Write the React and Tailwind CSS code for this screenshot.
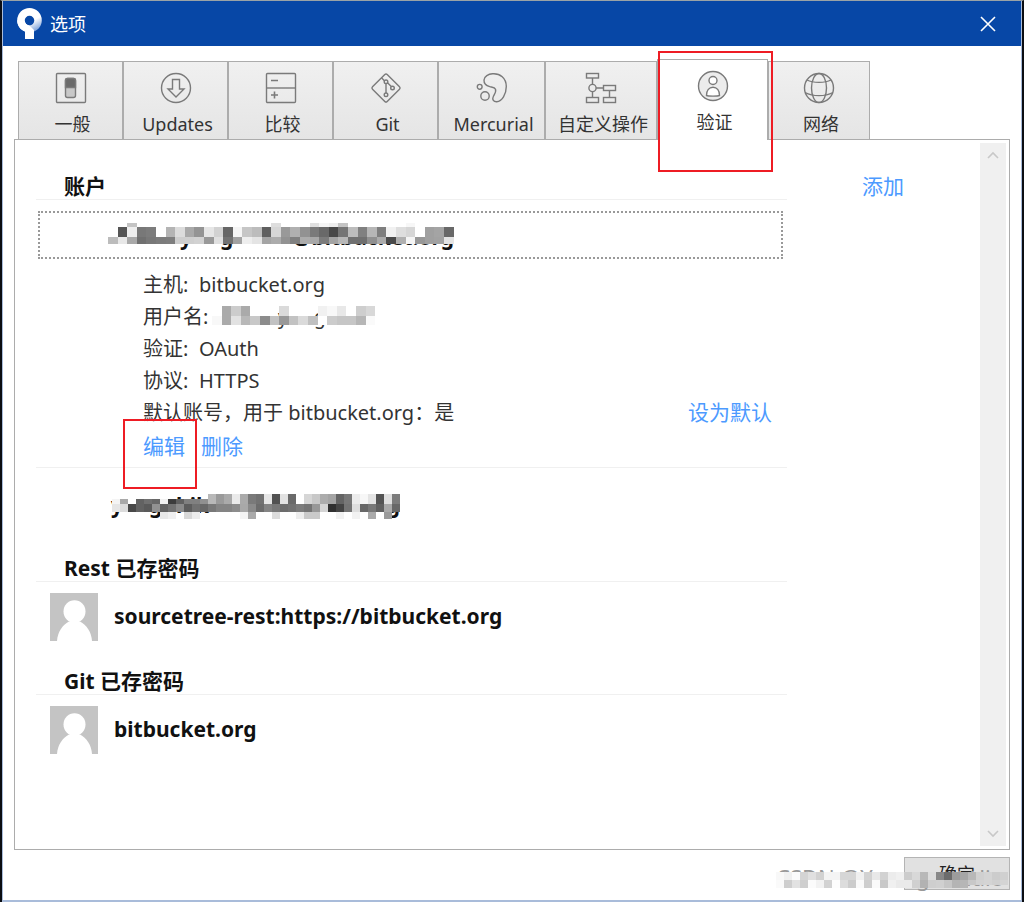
import { useState } from 'react';
import clsx from 'clsx';

const stroke = {
  fill: 'none',
  stroke: '#7a7a7a',
  strokeWidth: 1.4,
};

const GeneralIcon = () => (
  <svg width="32" height="32" viewBox="0 0 32 32" {...stroke}>
    <rect x="1.5" y="1.5" width="29" height="29" rx="1" />
    <rect x="10.5" y="6.5" width="10" height="19" rx="2" fill="#c8c8c8" />
    <path d="M10.500 15.500V8.500a2 2 0 0 1 2-2h6a2 2 0 0 1 2 2v7z" fill="#6a6a6a" />
  </svg>
);

const UpdatesIcon = () => (
  <svg width="32" height="32" viewBox="0 0 32 32" {...stroke}>
    <circle cx="16" cy="16" r="14.5" />
    <path d="M12.500 7.500h7v9.500h4.500l-8 8-8-8h4.500z" />
  </svg>
);

const DiffIcon = () => (
  <svg width="32" height="32" viewBox="0 0 32 32" {...stroke}>
    <rect x="1.5" y="1.5" width="29" height="29" rx="1" />
    <path d="M1.500 16h29" />
    <path d="M6 8.500h7M6 23h7M9.500 19.500v7" strokeWidth="1.6" />
  </svg>
);

const GitIcon = () => (
  <svg width="32" height="32" viewBox="0 0 32 32" {...stroke}>
    <path d="M14.800 2.500a1.700 1.700 0 0 1 2.400 0l12.300 12.300a1.700 1.700 0 0 1 0 2.400L17.200 29.500a1.700 1.700 0 0 1-2.400 0L2.500 17.200a1.700 1.700 0 0 1 0-2.400z" />
    <path d="M11.500 5.800l3.400 3.400M16 11.500v9.500M17.500 10.800l4 4" />
    <circle cx="16" cy="9.800" r="1.800" />
    <circle cx="22.500" cy="16" r="1.800" />
    <circle cx="16" cy="22.800" r="1.800" />
  </svg>
);

const MercurialIcon = () => (
  <svg width="32" height="32" viewBox="0 0 32 32" {...stroke}>
    <path d="M16.500 1.800C24 1.200 30.300 6 30.300 14.500c0 7.500-4.300 15-9.500 15.300-3.300.2-4.800-2.300-3.600-5 1-2.400 3.300-5 2.300-7.600-.8-2-3.500-2-5.700-2.600-3.600-1-6-3.200-5.800-6.600.2-3.700 4.500-5.900 8.500-6.200z" />
    <circle cx="3.700" cy="14.800" r="2.400" />
    <circle cx="9" cy="24" r="4.200" />
  </svg>
);

const ActionsIcon = () => (
  <svg width="32" height="32" viewBox="0 0 32 32" {...stroke}>
    <rect x="1.500" y="1.500" width="12" height="4.500" />
    <rect x="1.500" y="25.500" width="12" height="5" />
    <rect x="18.500" y="13.500" width="12" height="5" />
    <rect x="18.500" y="25.500" width="12" height="5" />
    <circle cx="7.500" cy="16" r="3.600" />
    <path d="M7.500 6v6.400M7.500 19.600v5.900M11.100 16h7.400M24.500 18.500v7" />
  </svg>
);

const AuthIcon = () => (
  <svg width="32" height="32" viewBox="0 0 32 32" {...stroke}>
    <circle cx="16" cy="16" r="14.500" fill="#ececec" />
    <circle cx="16" cy="10.500" r="4" fill="#fff" />
    <path d="M9.500 25.500c0-5 2.600-8.300 6.500-8.300s6.500 3.300 6.500 8.300c-2 .8-11 .8-13 0z" fill="#fff" />
  </svg>
);

const NetworkIcon = () => (
  <svg width="32" height="32" viewBox="0 0 32 32" {...stroke}>
    <circle cx="16" cy="16" r="14.500" />
    <ellipse cx="16" cy="16" rx="7.500" ry="14.500" />
    <path d="M4 8c6 3.200 18 3.200 24 0M2 20.500c8 4.200 20 4.200 28 0" />
  </svg>
);

const tabs = [
  { id: 'general', label: '一般', icon: GeneralIcon, width: 'w-[105px]' },
  { id: 'updates', label: 'Updates', icon: UpdatesIcon, width: 'w-[105px]' },
  { id: 'diff', label: '比较', icon: DiffIcon, width: 'w-[105px]' },
  { id: 'git', label: 'Git', icon: GitIcon, width: 'w-[105px]' },
  { id: 'mercurial', label: 'Mercurial', icon: MercurialIcon, width: 'w-[107px]' },
  { id: 'actions', label: '自定义操作', icon: ActionsIcon, width: 'w-[112px]' },
  { id: 'auth', label: '验证', icon: AuthIcon, width: 'w-[111px]' },
  { id: 'network', label: '网络', icon: NetworkIcon, width: 'w-[102px]' },
];

// Each row is a list of grey levels in hex, "--" leaves the cell empty
const accountRows = [
  { y: 0, h: 4, cells: '-- -- c4 -- -- -- -- -- -- -- -- -- -- -- -- -- -- de -- -- -- e0 f5 ee c4 -- -- -- -- -- -- f7' },
  { y: 4, h: 10, cells: '-- 55 ee 78 7c ff b4 dc a9 94 e6 d2 66 f5 c6 bc 5f d6 99 b0 92 7a 69 48 75 bc 80 b6 7e f1 de d6 ff a0 a4 68' },
  { y: 14, h: 7, cells: 'bc e8 a9 70 78 7c 7e ce cf d2 99 e0 72 a2 ee e4 a4 ac 92 80 ac a8 7c a4 b8 70 70 90 ab 4a b0 f5 98 a0 a2 e4' },
];

const userRows = [
  { y: 0, h: 10, cells: '-- aa cc aa -- -- -- da -- -- -- f1 f8 e8 -- ce d8' },
  { y: 10, h: 9, cells: 'f8 aa e2 b8 c8 8c c2 98 c2 da c0 ff cc c6 c6 b6 fa' },
];

const secondRows = [
  { y: 0, h: 2, cells: '-- -- -- -- -- -- -- -- -- -- -- -- b8 9a aa ea aa 7a 72 e6 52 e2 6a ff d6 c8 ac a4 64 78 ec f7 e4 54 e0 7c' },
  { y: 2, h: 3, cells: '-- -- -- -- -- -- -- -- -- -- -- -- b8 9a aa ea aa 7a 72 e6 52 e2 6a ff d6 c8 ac a4 64 78 ec f7 e4 54 e0 7c' },
  { y: 5, h: 5, cells: 'f4 a9 ff 62 70 68 f1 3c 60 80 80 90 b8 9a aa ea aa 7a 72 e6 52 e2 6a ff d6 c8 ac a4 64 78 ec f7 e4 54 e0 7c' },
  { y: 10, h: 8, cells: 'e6 dc 48 62 5a 92 62 72 8a 5c 70 68 78 84 84 8c a8 8a 6c 84 78 6c 72 7c 74 98 d4 30 44 74 de 68 78 60 aa 68' },
  { y: 18, h: 7, cells: '-- -- -- -- -- -- e8 f0 -- d8 ec -- -- -- -- -- f4 aa -- -- dc -- -- ee ca ca -- -- f2 -- f2 -- aa -- 9a' },
];

const watermarkRows = [
  { y: 6, h: 8, cells: 'f8 f0 fb d4 e0 d2 f4 f4 d6 d6 f0 d2 e8 d2 ec f0 cc d8 b8 dc 88 6c 9c a6 b8 d0 d4 cc d0' },
  { y: 14, h: 8, cells: 'fa ce e2 ce fb f2 d2 fd dc cc fa ce fa c8 f0 ea ea d0 b2 ce d0 c6 b4 b6' },
  { y: 14, h: 5, cells: '-- -- -- -- -- -- -- -- -- -- -- -- -- -- -- -- -- -- -- -- -- -- -- -- c8 d2 d4 d0 d4' },
];

function Mosaic({ rows, cell, width, height, className, children }) {
  return (
    <svg
      width={width}
      height={height}
      viewBox={`0 0 ${width} ${height}`}
      className={clsx('block overflow-visible', className)}
      shapeRendering="crispEdges"
    >
      {children}
      {rows.map((row, r) =>
        row.cells.split(' ').map((level, i) =>
          level === '--' ? null : (
            <rect
              key={`${r}-${i}`}
              x={i * cell}
              y={row.y}
              width={cell}
              height={row.h}
              fill={`#${level}${level}${level}`}
            />
          )
        )
      )}
    </svg>
  );
}

const Logo = () => (
  <svg width="25" height="32" viewBox="0 0 25 32">
    <defs>
      <linearGradient id="logo-shade" x1="0.400" y1="0.300" x2="0.800" y2="1">
        <stop offset="0.400" stopColor="#fff" />
        <stop offset="1" stopColor="#6f98d6" />
      </linearGradient>
    </defs>
    <path
      fillRule="evenodd"
      fill="url(#logo-shade)"
      d="M12.500 0a12.300 12.300 0 0 1 12.300 12.300c0 5.500-3.300 9.500-7.800 11.300H8C3.500 21.800.2 17.800.2 12.300A12.300 12.300 0 0 1 12.500 0zm0 7.800a4.800 4.800 0 1 0 0 9.600 4.800 4.800 0 0 0 0-9.600z"
    />
    <path fill="#fff" d="M.2 12.300c0 5.500 3.300 9.500 7.800 11.300V31h9v-9l-4.500-4.600a4.800 4.800 0 0 1-4.800-4.800z" />
  </svg>
);

const Avatar = () => (
  <svg width="48" height="48" viewBox="0 0 48 48" className="shrink-0">
    <path fill="#c4c4c4" d="M0 0h48v48H0z" />
    <ellipse cx="24.500" cy="18.500" rx="11" ry="11.200" fill="#fff" />
    <path fill="#fff" d="M7 48c.5-9 5.500-16 12-19.500h11C36.500 32 41.500 39 42 48z" />
  </svg>
);

const Chevron = ({ d }) => (
  <svg width="12" height="8" viewBox="0 0 12 8" fill="none" stroke="#c8c8c8" strokeWidth="1.600">
    <path d={d} />
  </svg>
);

function SectionTitle({ children, className }) {
  return (
    <h2
      className={clsx(
        'border-b border-[#f0f0f0] pl-7 text-[21px] leading-[26px] font-bold text-[#111]',
        className
      )}
    >
      {children}
    </h2>
  );
}

function SavedPassword({ name }) {
  return (
    <div className="mt-[11px] flex items-center gap-4 pl-[14px] text-[21px] font-bold text-[#111]">
      <Avatar />
      {name}
    </div>
  );
}

function Detail({ label, children }) {
  return (
    <div className="flex h-8 items-center">
      <dt className="min-w-14">{label}:</dt>
      <dd>{children}</dd>
    </div>
  );
}

export default function App() {
  const [active, setActive] = useState('auth');

  return (
    <div className="flex min-h-screen flex-col border-x-2 border-t border-x-[#0b0d12] border-t-[#9aa3a6] bg-white font-['Noto_Sans','Noto_Sans_CJK_SC',sans-serif] text-[#333]">
      <div className="flex flex-1 flex-col border-x border-b-2 border-[#a9bcda]">
        {/* Title bar */}
        <header className="flex h-[45px] items-center gap-2 bg-[#0747a6] pr-[25px] pl-[14px] text-white">
          <Logo />
          <h1 className="flex-1 text-lg">选项</h1>
          <button type="button" aria-label="关闭">
            <svg width="16" height="16" viewBox="0 0 16 16" fill="none" stroke="#fff" strokeWidth="1.600">
              <path d="M1 1l14 14M15 1L1 15" />
            </svg>
          </button>
        </header>

        <main className="flex flex-1 flex-col pt-[13px] pr-[11px] pb-[10px] pl-[11px]">
          {/* Tabs */}
          <nav className="flex items-end pl-1">
            {tabs.map(({ id, label, icon: Icon, width }) => (
              <button
                key={id}
                type="button"
                onClick={() => setActive(id)}
                className={clsx(
                  'relative flex shrink-0 flex-col items-center border border-b-0 border-[#acacac] pt-[10px] text-lg leading-[26px] whitespace-nowrap',
                  width,
                  active === id
                    ? 'z-10 -mb-px h-[81px] bg-white'
                    : 'h-[78px] bg-linear-to-b from-[#f0f0f0] to-[#e5e5e5]'
                )}
              >
                <Icon />
                <span className="mt-[7px] pl-1">{label}</span>
                {id === 'auth' && (
                  <span className="pointer-events-none absolute -top-[9px] -right-[6px] left-0 h-[121px] border-2 border-[#ee1c24]" />
                )}
              </button>
            ))}
          </nav>

          {/* Authentication panel */}
          <section className="flex flex-1 border border-[#acacac] py-[3px] pr-[3px] pl-[21px]">
            <div className="flex-1 pt-[30px]">
              <SectionTitle>账户</SectionTitle>
              <div className="mt-[11px] mr-1 ml-[2px] h-12 border-2 border-dotted border-[#999] pt-[10px] pl-[68px]">
                <Mosaic rows={accountRows} cell={9.6} width={346} height={21}>
                  <g className="text-[21px] font-bold" fill="#111">
                    <text x="72" y="22">y</text>
                    <text x="112" y="22">g</text>
                    <text x="346" y="22" textAnchor="end">@bitbucket.org</text>
                  </g>
                </Mosaic>
              </div>

              <div className="mt-[10px] border-b border-[#f0f0f0] pr-[15px] pb-[2px] pl-[107px] text-[20px]">
                <dl>
                  <Detail label="主机">bitbucket.org</Detail>
                  <Detail label="用户名">
                    <Mosaic rows={userRows} cell={9.6} width={164} height={22} className="ml-1">
                      <g className="text-[19px]" fill="#333">
                        <text x="66" y="18">y</text>
                        <text x="102" y="18">g</text>
                      </g>
                    </Mosaic>
                  </Detail>
                  <Detail label="验证">OAuth</Detail>
                  <Detail label="协议">HTTPS</Detail>
                </dl>
                <div className="flex h-8 items-center justify-between">
                  <p>默认账号，用于 bitbucket.org：是</p>
                  <a href="#default" className="text-[21px] text-[#4c9aff]">设为默认</a>
                </div>
                <div className="flex h-9 items-center gap-4 text-[21px] text-[#4c9aff]">
                  <span className="relative">
                    <a href="#edit">编辑</a>
                    <span className="pointer-events-none absolute -top-3 -right-3 -left-5 h-[70px] border-2 border-[#ee1c24]" />
                  </span>
                  <a href="#delete">删除</a>
                </div>
              </div>

              <Mosaic rows={secondRows} cell={8} width={288} height={26} className="mt-[26px] ml-[76px]">
                <g className="text-[21px] font-bold" fill="#111">
                  <text x="-1" y="19">y</text>
                  <text x="37" y="19">g</text>
                  <text x="64" y="19">hik</text>
                  <text x="288" y="19" textAnchor="end">g</text>
                </g>
              </Mosaic>

              <SectionTitle className="mt-[35px]">Rest 已存密码</SectionTitle>
              <SavedPassword name="sourcetree-rest:https://bitbucket.org" />
              <SectionTitle className="mt-[27px]">Git 已存密码</SectionTitle>
              <SavedPassword name="bitbucket.org" />
            </div>

            <div className="w-[193px] pt-[30px] pl-[75px] text-[21px] leading-[26px]">
              <a href="#add" className="text-[#4c9aff]">添加</a>
            </div>

            <div className="flex w-[26px] flex-col items-center justify-between bg-[#f0f0f0] py-2">
              <button type="button" aria-label="向上滚动">
                <Chevron d="M1 7l5-5 5 5" />
              </button>
              <button type="button" aria-label="向下滚动">
                <Chevron d="M1 1l5 5 5-5" />
              </button>
            </div>
          </section>

          {/* Footer */}
          <footer className="relative mt-[7px] flex justify-end">
            <button
              type="button"
              className="h-[33px] w-[106px] border border-[#b4b4b4] bg-[#e1e1e1] text-lg leading-[30px] text-[#222]"
            >
              确定
            </button>
            <Mosaic
              rows={watermarkRows}
              cell={8}
              width={232}
              height={24}
              className="pointer-events-none absolute top-[9px] right-[2px]"
            >
              <g className="text-[22px]" fill="#999">
                <text x="0" y="20">CSDN @Y</text>
                <text x="140" y="20">g</text>
                <text x="228" y="20" textAnchor="end">udio</text>
              </g>
            </Mosaic>
          </footer>
        </main>
      </div>
    </div>
  );
}
